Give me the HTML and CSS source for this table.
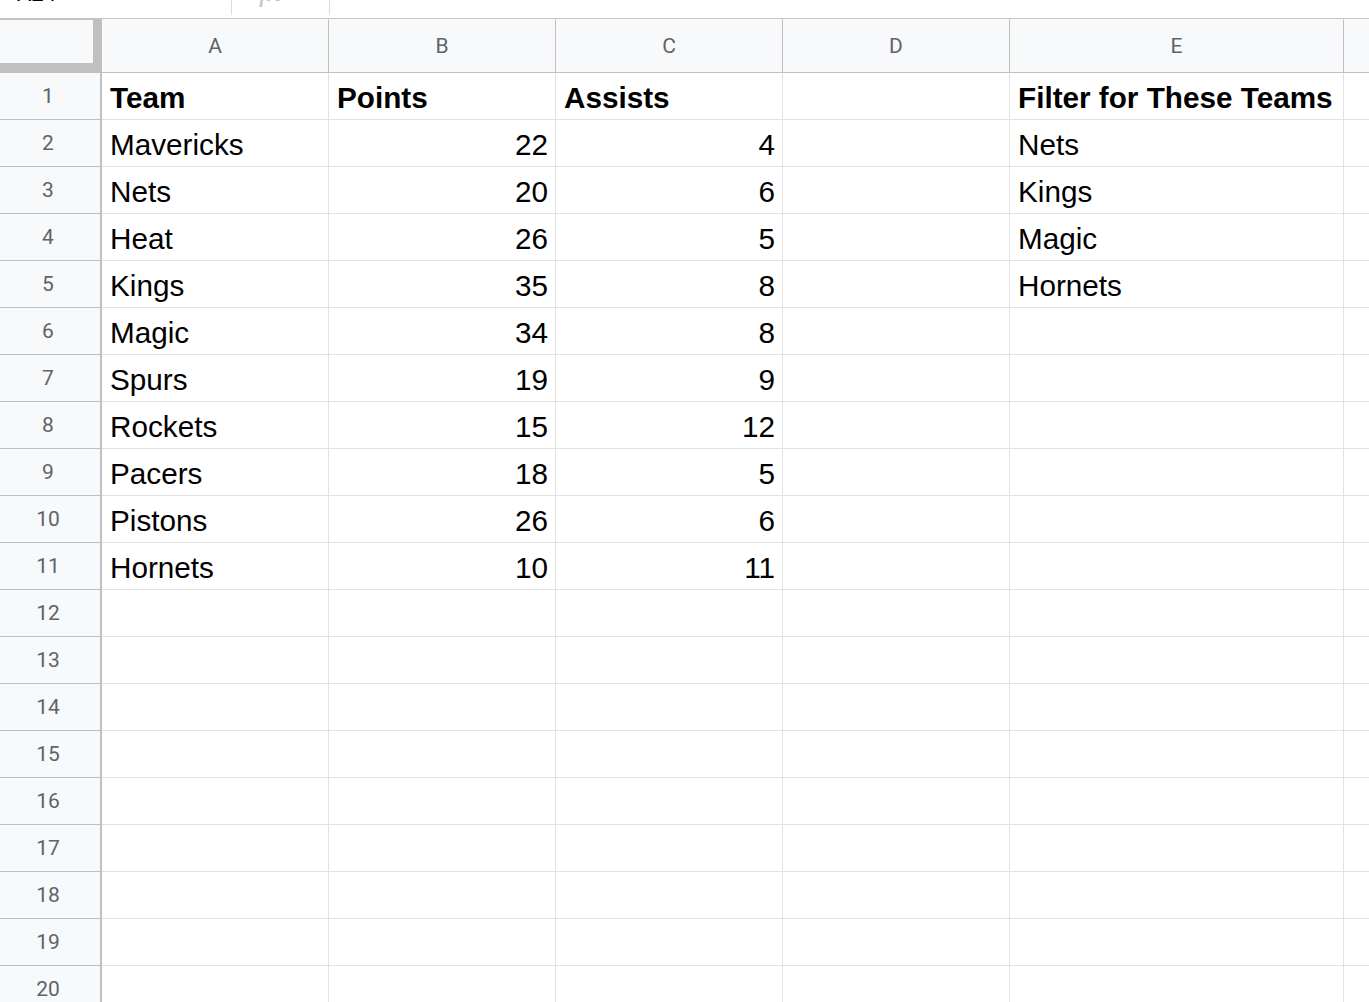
FILE: index.html
```html
<!DOCTYPE html>
<html>
<head>
<meta charset="utf-8">
<link rel="stylesheet" href="styles.css">
</head>
<body>
<div class="topbar">
  <div class="namebox"><span class="clip">A24</span></div>
  <div class="fxbox"><span class="fx">fx</span></div>
</div>
<div class="sheet">
  <div class="corner"><div class="corner-inner"></div></div>
  <div class="colhdr">A</div><div class="colhdr">B</div><div class="colhdr">C</div><div class="colhdr">D</div><div class="colhdr">E</div><div class="colhdr last"></div>

  <div class="rowhdr">1</div><div class="cell b">Team</div><div class="cell b">Points</div><div class="cell b">Assists</div><div class="cell"></div><div class="cell b">Filter for These Teams</div><div class="cell last"></div>
  <div class="rowhdr">2</div><div class="cell">Mavericks</div><div class="cell n">22</div><div class="cell n">4</div><div class="cell"></div><div class="cell">Nets</div><div class="cell last"></div>
  <div class="rowhdr">3</div><div class="cell">Nets</div><div class="cell n">20</div><div class="cell n">6</div><div class="cell"></div><div class="cell">Kings</div><div class="cell last"></div>
  <div class="rowhdr">4</div><div class="cell">Heat</div><div class="cell n">26</div><div class="cell n">5</div><div class="cell"></div><div class="cell">Magic</div><div class="cell last"></div>
  <div class="rowhdr">5</div><div class="cell">Kings</div><div class="cell n">35</div><div class="cell n">8</div><div class="cell"></div><div class="cell">Hornets</div><div class="cell last"></div>
  <div class="rowhdr">6</div><div class="cell">Magic</div><div class="cell n">34</div><div class="cell n">8</div><div class="cell"></div><div class="cell"></div><div class="cell last"></div>
  <div class="rowhdr">7</div><div class="cell">Spurs</div><div class="cell n">19</div><div class="cell n">9</div><div class="cell"></div><div class="cell"></div><div class="cell last"></div>
  <div class="rowhdr">8</div><div class="cell">Rockets</div><div class="cell n">15</div><div class="cell n">12</div><div class="cell"></div><div class="cell"></div><div class="cell last"></div>
  <div class="rowhdr">9</div><div class="cell">Pacers</div><div class="cell n">18</div><div class="cell n">5</div><div class="cell"></div><div class="cell"></div><div class="cell last"></div>
  <div class="rowhdr">10</div><div class="cell">Pistons</div><div class="cell n">26</div><div class="cell n">6</div><div class="cell"></div><div class="cell"></div><div class="cell last"></div>
  <div class="rowhdr">11</div><div class="cell">Hornets</div><div class="cell n">10</div><div class="cell n">11</div><div class="cell"></div><div class="cell"></div><div class="cell last"></div>
  <div class="rowhdr">12</div><div class="cell"></div><div class="cell"></div><div class="cell"></div><div class="cell"></div><div class="cell"></div><div class="cell last"></div>
  <div class="rowhdr">13</div><div class="cell"></div><div class="cell"></div><div class="cell"></div><div class="cell"></div><div class="cell"></div><div class="cell last"></div>
  <div class="rowhdr">14</div><div class="cell"></div><div class="cell"></div><div class="cell"></div><div class="cell"></div><div class="cell"></div><div class="cell last"></div>
  <div class="rowhdr">15</div><div class="cell"></div><div class="cell"></div><div class="cell"></div><div class="cell"></div><div class="cell"></div><div class="cell last"></div>
  <div class="rowhdr">16</div><div class="cell"></div><div class="cell"></div><div class="cell"></div><div class="cell"></div><div class="cell"></div><div class="cell last"></div>
  <div class="rowhdr">17</div><div class="cell"></div><div class="cell"></div><div class="cell"></div><div class="cell"></div><div class="cell"></div><div class="cell last"></div>
  <div class="rowhdr">18</div><div class="cell"></div><div class="cell"></div><div class="cell"></div><div class="cell"></div><div class="cell"></div><div class="cell last"></div>
  <div class="rowhdr">19</div><div class="cell"></div><div class="cell"></div><div class="cell"></div><div class="cell"></div><div class="cell"></div><div class="cell last"></div>
  <div class="rowhdr">20</div><div class="cell"></div><div class="cell"></div><div class="cell"></div><div class="cell"></div><div class="cell"></div><div class="cell last"></div>
</div>
</body>
</html>
```

FILE: styles.css
```css
* { box-sizing: border-box; }
html, body { margin: 0; padding: 0; background: #fff; overflow: hidden; }
body { width: 1369px; height: 1002px; font-family: "Liberation Sans", Arial, sans-serif; }

.topbar {
  height: 19px;
  border-bottom: 1px solid #c7c7c7;
  display: flex;
  align-items: flex-start;
}
.namebox {
  width: 232px;
  height: 15px;
  border-right: 1px solid #dadce0;
  overflow: hidden;
  padding-left: 17px;
}
.clip {
  display: block;
  font-family: Roboto, "Liberation Sans", sans-serif;
  font-size: 22px;
  line-height: 22px;
  color: #000;
  margin-top: -17px;
}
.fxbox {
  width: 98px;
  height: 15px;
  border-right: 1px solid #dadce0;
  overflow: hidden;
  padding-left: 27px;
}
.fx {
  display: block;
  font-family: "Liberation Serif", serif;
  font-style: italic;
  font-size: 30px;
  line-height: 30px;
  color: #c4c4c4;
  margin-top: -24px;
}

.sheet {
  display: grid;
  grid-template-columns: 102px 227px 227px 227px 227px 334px 1fr;
  grid-template-rows: 54px repeat(20, 47px);
}

.corner {
  background: #c0c0c0;
  border-bottom: 1px solid #c0c0c0;
  padding: 1px 9px 9px 0;
}
.corner-inner {
  background: #f8f9fa;
  height: 100%;
}

.colhdr {
  background: #f8f9fa;
  border-right: 1px solid #c0c0c0;
  border-bottom: 1px solid #c0c0c0;
  border-top: 1px solid #f8f9fa;
  display: flex;
  align-items: center;
  justify-content: center;
  font-family: Roboto, "Liberation Sans", sans-serif;
  font-size: 21px;
  color: #5f6368;
}
.colhdr.last { border-right: none; }

.rowhdr {
  background: #f8f9fa;
  border-right: 2px solid #c0c0c0;
  border-bottom: 1px solid #c0c0c0;
  display: flex;
  align-items: center;
  justify-content: center;
  font-family: Roboto, "Liberation Sans", sans-serif;
  font-size: 21px;
  color: #5f6368;
  padding-right: 4px;
}

.cell {
  border-right: 1px solid #e2e2e2;
  border-bottom: 1px solid #e2e2e2;
  display: flex;
  align-items: flex-end;
  padding: 0 7px 6px 8px;
  font-size: 29.7px;
  line-height: 30px;
  color: #000;
  white-space: nowrap;
  overflow: hidden;
}
.cell.last { border-right: none; }
.cell.b { font-weight: bold; }
.cell.n { justify-content: flex-end; }
```
